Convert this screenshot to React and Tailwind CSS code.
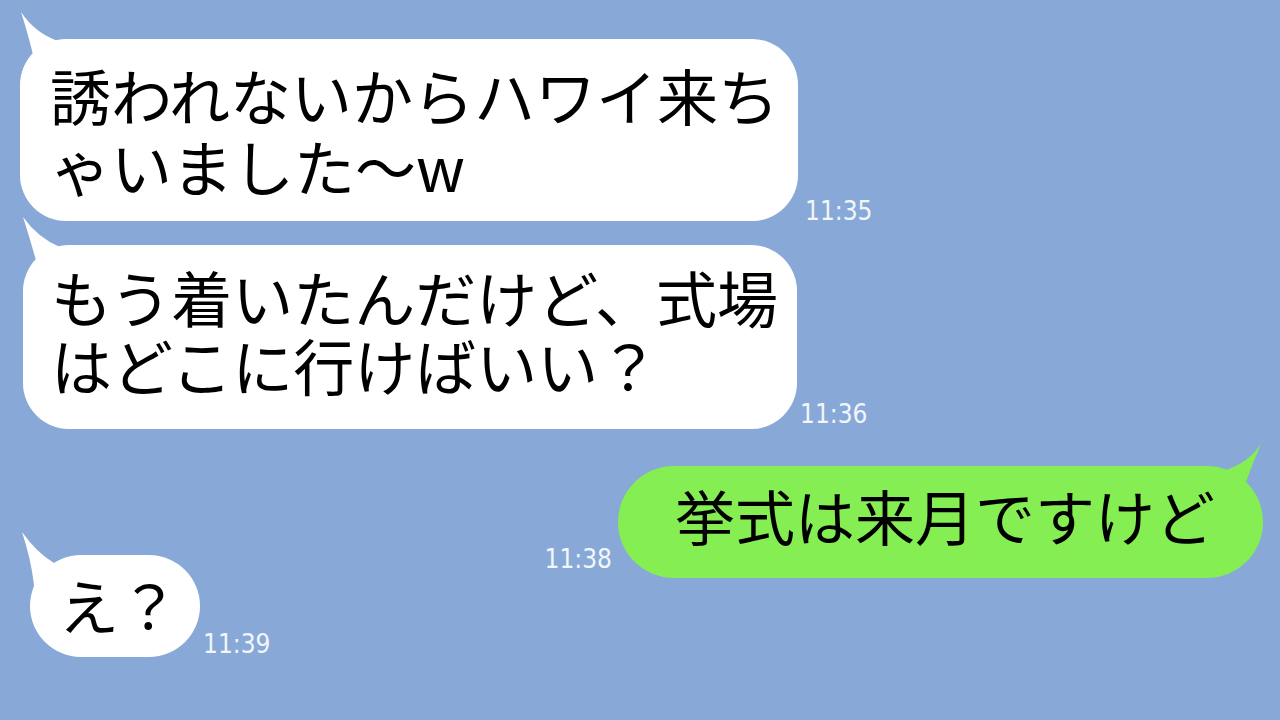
const TailL = ({ d, fill = "#ffffff" }) => (
  <svg className="absolute left-0 top-0 overflow-visible" width="1" height="1">
    <path d={d} fill={fill} />
  </svg>
);

const TailR = ({ d, fill }) => (
  <svg className="absolute right-0 top-0 overflow-visible" width="1" height="1">
    <path d={d} fill={fill} />
  </svg>
);

const Time = ({ children, className }) => (
  <span
    className={
      "font-['DejaVu_Sans_Condensed','DejaVu_Sans',sans-serif] text-[26px] leading-[30px] text-[#f2f6fb] whitespace-nowrap " +
      className
    }
  >
    {children}
  </span>
);

export default function App() {
  return (
    <div className="w-[1280px] h-[720px] bg-[#88a9d7] overflow-hidden flex flex-col pt-[39px] font-['Noto_Sans_CJK_JP','Noto_Sans',sans-serif] text-black">
      {/* Row 1 */}
      <div className="flex items-end pl-[20px]">
        <div className="relative w-[778px] h-[182px] bg-white rounded-[46px] pl-[30px] pt-[20px] text-[61px] leading-[71px] whitespace-nowrap">
          <TailL d="M1,-27 Q15,-6 38,2 L45,45 L14,45 L14,20 Q9,-2 1,-27 Z" />
          <p className="relative">
            <span className="block">誘われないからハワイ来ち</span>
            <span className="block">ゃいました～w</span>
          </p>
        </div>
        <Time className="ml-[7px] mb-[-5px]">11:35</Time>
      </div>

      {/* Row 2 */}
      <div className="flex items-end pl-[23px] mt-[24px]">
        <div className="relative w-[774px] h-[184px] bg-white rounded-[46px] pl-[28px] pt-[18px] text-[61px] leading-[68px] whitespace-nowrap">
          <TailL d="M0,-28 Q15,-7 37,2 L45,45 L14,45 L14,19 Q8,-3 0,-28 Z" />
          <p className="relative">
            <span className="block">もう着いたんだけど、式場</span>
            <span className="block">はどこに行けばいい？</span>
          </p>
        </div>
        <Time className="ml-[3px] mb-0">11:36</Time>
      </div>

      {/* Row 3 */}
      <div className="flex items-end justify-end pr-[17px] mt-[37px]">
        <Time className="mr-[6px] mb-[4px]">11:38</Time>
        <div className="relative w-[645px] h-[112px] bg-[#85ee53] rounded-full pl-[57px] pt-[14px] text-[60px] leading-[70px] whitespace-nowrap">
          <TailR
            fill="#85ee53"
            d="M-1,-22 Q-13,-4 -36,4 L-45,45 L-16,45 L-16,16 Q-9,-4 -1,-22 Z"
          />
          <p className="relative">挙式は来月ですけど</p>
        </div>
      </div>

      {/* Row 4 */}
      <div className="flex items-end pl-[30px] mt-[-23px]">
        <div className="relative w-[170px] h-[102px] bg-white rounded-full pl-[29px] pt-[14px] text-[60px] leading-[70px] whitespace-nowrap">
          <TailL d="M-8,-23 Q7,-2 24,8 L45,45 L4,45 L4,30 Q1,4 -8,-23 Z" />
          <p className="relative">え？</p>
        </div>
        <Time className="ml-[3px] mb-[-2px]">11:39</Time>
      </div>
    </div>
  );
}
